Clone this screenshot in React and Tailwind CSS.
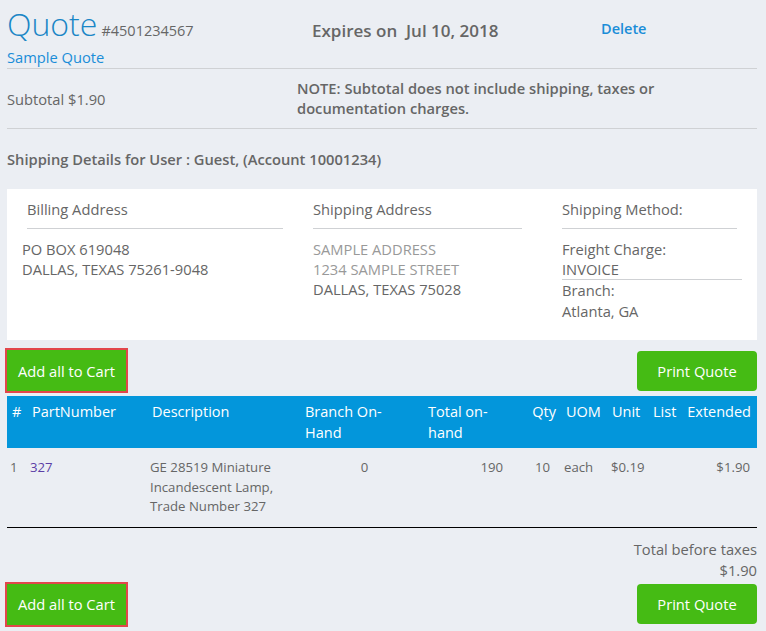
import React from 'react'

function AddButton() {
  return (
    <button className="border-2 border-[#e2474b] bg-[#45bb14] w-[123px] h-[45px] text-[14.7px] text-white">
      Add all to Cart
    </button>
  )
}

function PrintButton() {
  return (
    <button className="rounded bg-[#45bb14] w-[120px] h-[40px] text-[14.7px] text-white">Print Quote</button>
  )
}

export default function App() {
  return (
    <div className="min-h-[631px] bg-[#ebeef3] pl-[7px] pr-[9px] text-[#666] font-['Open_Sans',sans-serif] text-[14.7px] leading-[20px]">
      {/* Header */}
      <div className="flex h-[69px] border-b border-[#cfd1d4]">
        <div className="w-[290px] pt-[5px]">
          <div className="flex items-baseline">
            <span className="text-[32px] leading-[38px] font-light text-[#1a86c6]">Quote</span>
            <span className="ml-[4px] text-[14.5px] text-[#666]">#4501234567</span>
          </div>
          <div className="mt-[4px] text-[#1a8dd8]">Sample Quote</div>
        </div>
        <div className="w-[304px] pt-[21px] pl-[15px] text-[17px] font-semibold">Expires on&nbsp; Jul 10, 2018</div>
        <div className="pt-[19px] text-[14.5px] font-semibold text-[#1a8dd8]">Delete</div>
      </div>
      <div className="flex h-[60px] items-center border-b border-[#cfd1d4]">
        <div className="w-[290px]">Subtotal $1.90</div>
        <div className="w-[380px] pb-[1px] font-semibold">NOTE: Subtotal does not include shipping, taxes or documentation charges.</div>
      </div>
      <div className="pt-[20px] font-semibold">Shipping Details for User : Guest, (Account 10001234)</div>

      {/* Addresses */}
      <div className="mt-[20px] flex h-[151px] bg-white pl-[15px] pt-[10px]">
        <div className="w-[291px]">
          <div className="ml-[5px] w-[256px] border-b border-[#cfd1d4] pb-[9px]">Billing Address</div>
          <div className="mt-[10px]">PO BOX 619048</div>
          <div>DALLAS, TEXAS 75261-9048</div>
        </div>
        <div className="w-[249px]">
          <div className="w-[209px] border-b border-[#cfd1d4] pb-[9px]">Shipping Address</div>
          <div className="mt-[10px] text-[#999]">SAMPLE ADDRESS</div>
          <div className="text-[#999]">1234 SAMPLE STREET</div>
          <div>DALLAS, TEXAS 75028</div>
        </div>
        <div className="w-[180px]">
          <div className="w-[175px] border-b border-[#cfd1d4] pb-[9px]">Shipping Method:</div>
          <div className="mt-[10px]">Freight Charge:</div>
          <div className="border-b border-[#cfd1d4]">INVOICE</div>
          <div className="leading-[21px]">Branch:</div>
          <div className="leading-[21px]">Atlanta, GA</div>
        </div>
      </div>

      <div className="flex items-center justify-between -ml-[2px] mt-[8px] h-[45px]">
        <AddButton />
        <PrintButton />
      </div>

      {/* Table */}
      <table className="mt-[3px] w-full table-fixed border-collapse border-b border-black text-left">
        <thead>
          <tr className="bg-[#0396db] text-white align-top text-[14.5px] leading-[21px]">
            <th className="font-normal pl-[5px] pt-[5px] pb-[5px] w-[23px]">#</th>
            <th className="font-normal pl-[2px] pt-[5px] pb-[5px] w-[120px]">PartNumber</th>
            <th className="font-normal pl-[2px] pt-[5px] pb-[5px] w-[153px]">Description</th>
            <th className="font-normal pl-[2px] pt-[5px] pb-[5px] w-[123px]">Branch On-<br />Hand</th>
            <th className="font-normal pl-[2px] pt-[5px] pb-[5px] w-[94px]">Total on-<br />hand</th>
            <th className="font-normal pt-[5px] pb-[5px] w-[40px] text-right pr-[4px]">Qty</th>
            <th className="font-normal pt-[5px] pb-[5px] w-[48px] pl-[6px]">UOM</th>
            <th className="font-normal pt-[5px] pb-[5px] w-[42px] pl-[4px]">Unit</th>
            <th className="font-normal pt-[5px] pb-[5px] w-[35px] pl-[3px]">List</th>
            <th className="font-normal pt-[5px] pb-[5px] text-right pr-[6px]">Extended</th>
          </tr>
        </thead>
        <tbody>
          <tr className="align-top text-[13.2px] leading-[19.5px] text-[#666]">
            <td className="pl-[3px] pt-[10px] pb-[10px] text-[#666]">1</td>
            <td className="pt-[10px] pb-[10px] font-normal text-[#5b3ea6]">327</td>
            <td className="pt-[10px] pb-[10px] pr-[10px]">GE 28519 Miniature Incandescent Lamp, Trade Number 327</td>
            <td className="pt-[10px] pb-[10px] text-center">0</td>
            <td className="pt-[10px] pb-[10px] pr-[17px] text-right">190</td>
            <td className="pt-[10px] pb-[10px] text-right pr-[10px]">10</td>
            <td className="pt-[10px] pb-[10px] pl-[4px]">each</td>
            <td className="pt-[10px] pb-[10px] pl-[3px]">$0.19</td>
            <td className="pt-[10px] pb-[10px]"></td>
            <td className="pt-[10px] pb-[10px] text-right pr-[7px]">$1.90</td>
          </tr>
        </tbody>
      </table>

      <div className="mt-[11px] text-right leading-[21px]">
        <div>Total before taxes</div>
        <div>$1.90</div>
      </div>
      <div className="flex items-center justify-between -ml-[2px] mt-[1px] h-[45px]">
        <AddButton />
        <PrintButton />
      </div>
    </div>
  )
}
